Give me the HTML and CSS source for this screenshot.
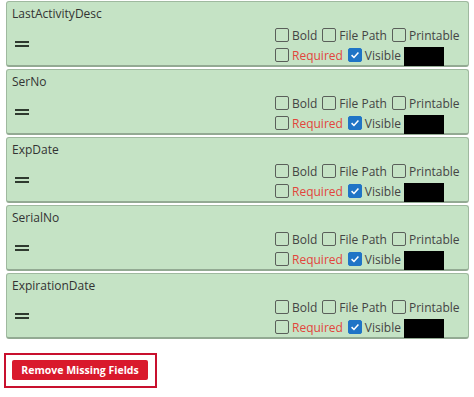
FILE: index.html
```html
<!DOCTYPE html>
<html>
<head>
<meta charset="utf-8">
<link rel="stylesheet" href="styles.css">
</head>
<body>
<div class="list">
  <div class="card">
    <div class="left">
      <div class="label">LastActivityDesc</div>
      <div class="handle"><span></span><span></span></div>
    </div>
    <div class="opts">
      <div class="row">
        <label class="opt"><span class="cb"></span>Bold</label>
        <label class="opt"><span class="cb"></span>File Path</label>
        <label class="opt"><span class="cb"></span>Printable</label>
      </div>
      <div class="row">
        <label class="opt req"><span class="cb"></span>Required</label>
        <label class="opt"><span class="cb on"><svg viewBox="0 0 14 14"><path d="M3 7.2 L5.8 9.9 L11 4.2" fill="none" stroke="#fff" stroke-width="1.8"/></svg></span>Visible</label>
        <span class="swatch"></span>
      </div>
    </div>
  </div>
  <div class="card">
    <div class="left">
      <div class="label">SerNo</div>
      <div class="handle"><span></span><span></span></div>
    </div>
    <div class="opts">
      <div class="row">
        <label class="opt"><span class="cb"></span>Bold</label>
        <label class="opt"><span class="cb"></span>File Path</label>
        <label class="opt"><span class="cb"></span>Printable</label>
      </div>
      <div class="row">
        <label class="opt req"><span class="cb"></span>Required</label>
        <label class="opt"><span class="cb on"><svg viewBox="0 0 14 14"><path d="M3 7.2 L5.8 9.9 L11 4.2" fill="none" stroke="#fff" stroke-width="1.8"/></svg></span>Visible</label>
        <span class="swatch"></span>
      </div>
    </div>
  </div>
  <div class="card">
    <div class="left">
      <div class="label">ExpDate</div>
      <div class="handle"><span></span><span></span></div>
    </div>
    <div class="opts">
      <div class="row">
        <label class="opt"><span class="cb"></span>Bold</label>
        <label class="opt"><span class="cb"></span>File Path</label>
        <label class="opt"><span class="cb"></span>Printable</label>
      </div>
      <div class="row">
        <label class="opt req"><span class="cb"></span>Required</label>
        <label class="opt"><span class="cb on"><svg viewBox="0 0 14 14"><path d="M3 7.2 L5.8 9.9 L11 4.2" fill="none" stroke="#fff" stroke-width="1.8"/></svg></span>Visible</label>
        <span class="swatch"></span>
      </div>
    </div>
  </div>
  <div class="card">
    <div class="left">
      <div class="label">SerialNo</div>
      <div class="handle"><span></span><span></span></div>
    </div>
    <div class="opts">
      <div class="row">
        <label class="opt"><span class="cb"></span>Bold</label>
        <label class="opt"><span class="cb"></span>File Path</label>
        <label class="opt"><span class="cb"></span>Printable</label>
      </div>
      <div class="row">
        <label class="opt req"><span class="cb"></span>Required</label>
        <label class="opt"><span class="cb on"><svg viewBox="0 0 14 14"><path d="M3 7.2 L5.8 9.9 L11 4.2" fill="none" stroke="#fff" stroke-width="1.8"/></svg></span>Visible</label>
        <span class="swatch"></span>
      </div>
    </div>
  </div>
  <div class="card">
    <div class="left">
      <div class="label">ExpirationDate</div>
      <div class="handle"><span></span><span></span></div>
    </div>
    <div class="opts">
      <div class="row">
        <label class="opt"><span class="cb"></span>Bold</label>
        <label class="opt"><span class="cb"></span>File Path</label>
        <label class="opt"><span class="cb"></span>Printable</label>
      </div>
      <div class="row">
        <label class="opt req"><span class="cb"></span>Required</label>
        <label class="opt"><span class="cb on"><svg viewBox="0 0 14 14"><path d="M3 7.2 L5.8 9.9 L11 4.2" fill="none" stroke="#fff" stroke-width="1.8"/></svg></span>Visible</label>
        <span class="swatch"></span>
      </div>
    </div>
  </div>
</div>
<div class="btnwrap">
  <button class="btn">Remove Missing Fields</button>
</div>
</body>
</html>
```
FILE: styles.css
```css
html, body {
  margin: 0;
  padding: 0;
  background: #fff;
  font-family: "Open Sans", "Noto Sans", sans-serif;
  color: #3a3a3a;
}
.list {
  padding: 1px 5px 0 6px;
  width: 463px;
}
.card {
  box-sizing: border-box;
  height: 66px;
  margin-bottom: 2px;
  background: #c5e3c5;
  border: 1px solid #9fb99f;
  border-bottom: 2px solid #93aa93;
  border-radius: 3px;
  display: flex;
  justify-content: space-between;
}
.left {
  padding: 3px 0 0 5px;
  display: flex;
  flex-direction: column;
}
.label {
  font-size: 12px;
  line-height: 17px;
  color: #333;
}
.handle {
  margin: 19px 0 0 3px;
  width: 14px;
  display: flex;
  flex-direction: column;
  gap: 2px;
}
.handle span {
  height: 2px;
  background: #2f3a2f;
}
.opts {
  padding: 23px 5px 0 0;
  width: 188px;
}
.row {
  display: flex;
  align-items: center;
  height: 20px;
}
.opt {
  display: flex;
  align-items: center;
  font-size: 12px;
  color: #444;
  margin-right: 5px;
  white-space: nowrap;
}
.opt.req {
  color: #e2453c;
}
.cb {
  box-sizing: border-box;
  width: 14px;
  height: 14px;
  border: 1px solid #5a5f5a;
  border-radius: 2px;
  margin-right: 3px;
  display: block;
}
.cb.on {
  background: #1f74c6;
  border-color: #1f74c6;
}
.cb svg {
  display: block;
  width: 12px;
  height: 12px;
}
.swatch {
  display: block;
  width: 40px;
  height: 19px;
  background: #000;
  margin-left: -2px;
  margin-top: 2px;
}
.btnwrap {
  margin: 14px 0 0 4px;
  width: 143px;
  height: 26px;
  border: 2px solid #c8102e;
  padding: 5px 0 0 6px;
  box-sizing: content-box;
}
.btn {
  display: block;
  width: 136px;
  height: 20px;
  background: #d9192c;
  color: #fff;
  border: none;
  border-radius: 2px;
  font-family: "Open Sans", "Noto Sans", sans-serif;
  font-weight: 700;
  font-size: 10.5px;
  padding: 0;
  line-height: 20px;
}
```
